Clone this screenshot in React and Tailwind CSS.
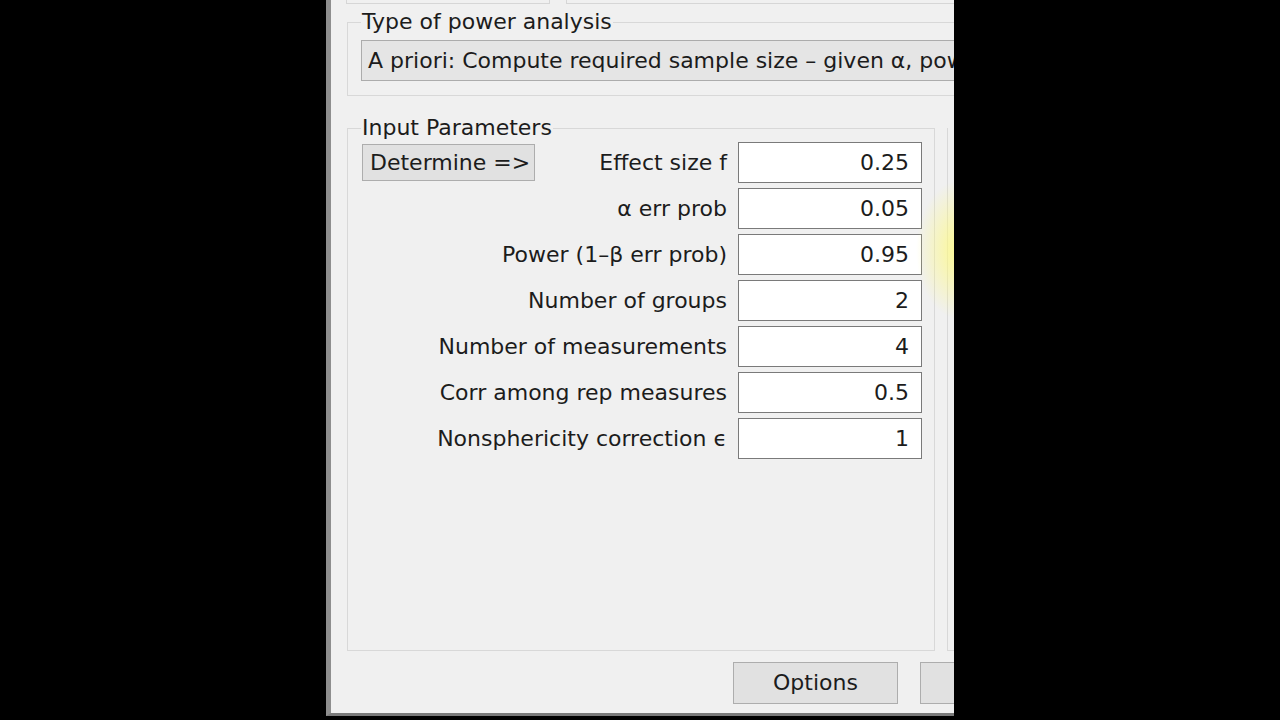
import React from "react";

const font = { fontFamily: '"DejaVu Sans", "Open Sans", sans-serif' };

const rows = [
  ["Effect size f", "0.25"],
  ["α err prob", "0.05"],
  ["Power (1–β err prob)", "0.95"],
  ["Number of groups", "2"],
  ["Number of measurements", "4"],
  ["Corr among rep measures", "0.5"],
  ["Nonsphericity correction ϵ", "1"],
];

export default function App() {
  return (
    <div className="w-[1280px] h-[720px] bg-black flex overflow-hidden" style={font}>
      <div className="w-[326px] shrink-0" />
      <div className="w-[628px] shrink-0 h-[716px] relative overflow-hidden bg-[#f0f0f0] border-l-[5px] border-[#8e8e8e] border-b-[3px] border-b-[#7a7a7a] text-[#1c1c1c] text-[22px] leading-[24px]">
        <div className="w-[1000px] flex flex-col">
          {/* tab strip */}
          <div className="flex h-[4px] pl-[15px] gap-[16px]">
            <div className="w-[204px] h-[4px] border border-t-0 border-[#d6d6d6]" />
            <div className="w-[600px] h-[4px] border border-t-0 border-[#d6d6d6]" />
          </div>

          {/* Type of power analysis */}
          <fieldset className="mt-[6px] ml-[16px] w-[800px] border border-[#d8d8d8] pl-[13px] pt-[6px] pb-[14px]">
            <legend className="px-[1px]">Type of power analysis</legend>
            <div className="h-[41px] bg-[#e5e5e5] border border-[#acacac] flex items-center pl-[6px] whitespace-nowrap">
              A priori: Compute required sample size – given α, power, and effect size
            </div>
          </fieldset>

          <div className="flex mt-[20px] ml-[16px] gap-[12px]">
            {/* Input Parameters */}
            <fieldset className="w-[588px] h-[535px] border border-[#d8d8d8] pl-[14px] pt-[2px]">
              <legend className="px-[1px] -ml-[1px]">Input Parameters</legend>
              <div className="flex flex-col gap-[5px]">
                {rows.map(([label, value], i) => (
                  <div key={label} className="flex items-center h-[41px]">
                    <div className="w-[365px] flex items-center justify-between">
                      {i === 0 ? (
                        <div className="w-[173px] h-[37px] bg-[#e1e1e1] border border-[#adadad] flex items-center pl-[7px] whitespace-nowrap">
                          Determine =&gt;
                        </div>
                      ) : (
                        <div />
                      )}
                      <span className="whitespace-nowrap">{label}</span>
                    </div>
                    <div className="ml-[11px] w-[184px] h-[41px] bg-white border border-[#7a7a7a] flex items-center justify-end pr-[12px]">
                      {value}
                    </div>
                  </div>
                ))}
              </div>
            </fieldset>
            {/* Output group (clipped) */}
            <fieldset className="w-[300px] h-[535px] border border-[#d8d8d8]">
              <legend className="px-[1px] invisible">Output</legend>
            </fieldset>
          </div>

          {/* buttons */}
          <div className="flex mt-[11px] pl-[402px] gap-[22px]">
            <div className="w-[165px] h-[42px] bg-[#e1e1e1] border border-[#adadad] flex items-center justify-center">
              Options
            </div>
            <div className="w-[165px] h-[42px] bg-[#e1e1e1] border border-[#adadad]" />
          </div>
        </div>
        {/* cursor highlight */}
        <div
          className="absolute left-[585px] top-[180px] w-[90px] h-[140px] rounded-full pointer-events-none"
          style={{ background: "radial-gradient(closest-side, rgba(255,250,130,0.9), rgba(255,250,130,0))" }}
        />
      </div>
      <div className="flex-1" />
    </div>
  );
}
